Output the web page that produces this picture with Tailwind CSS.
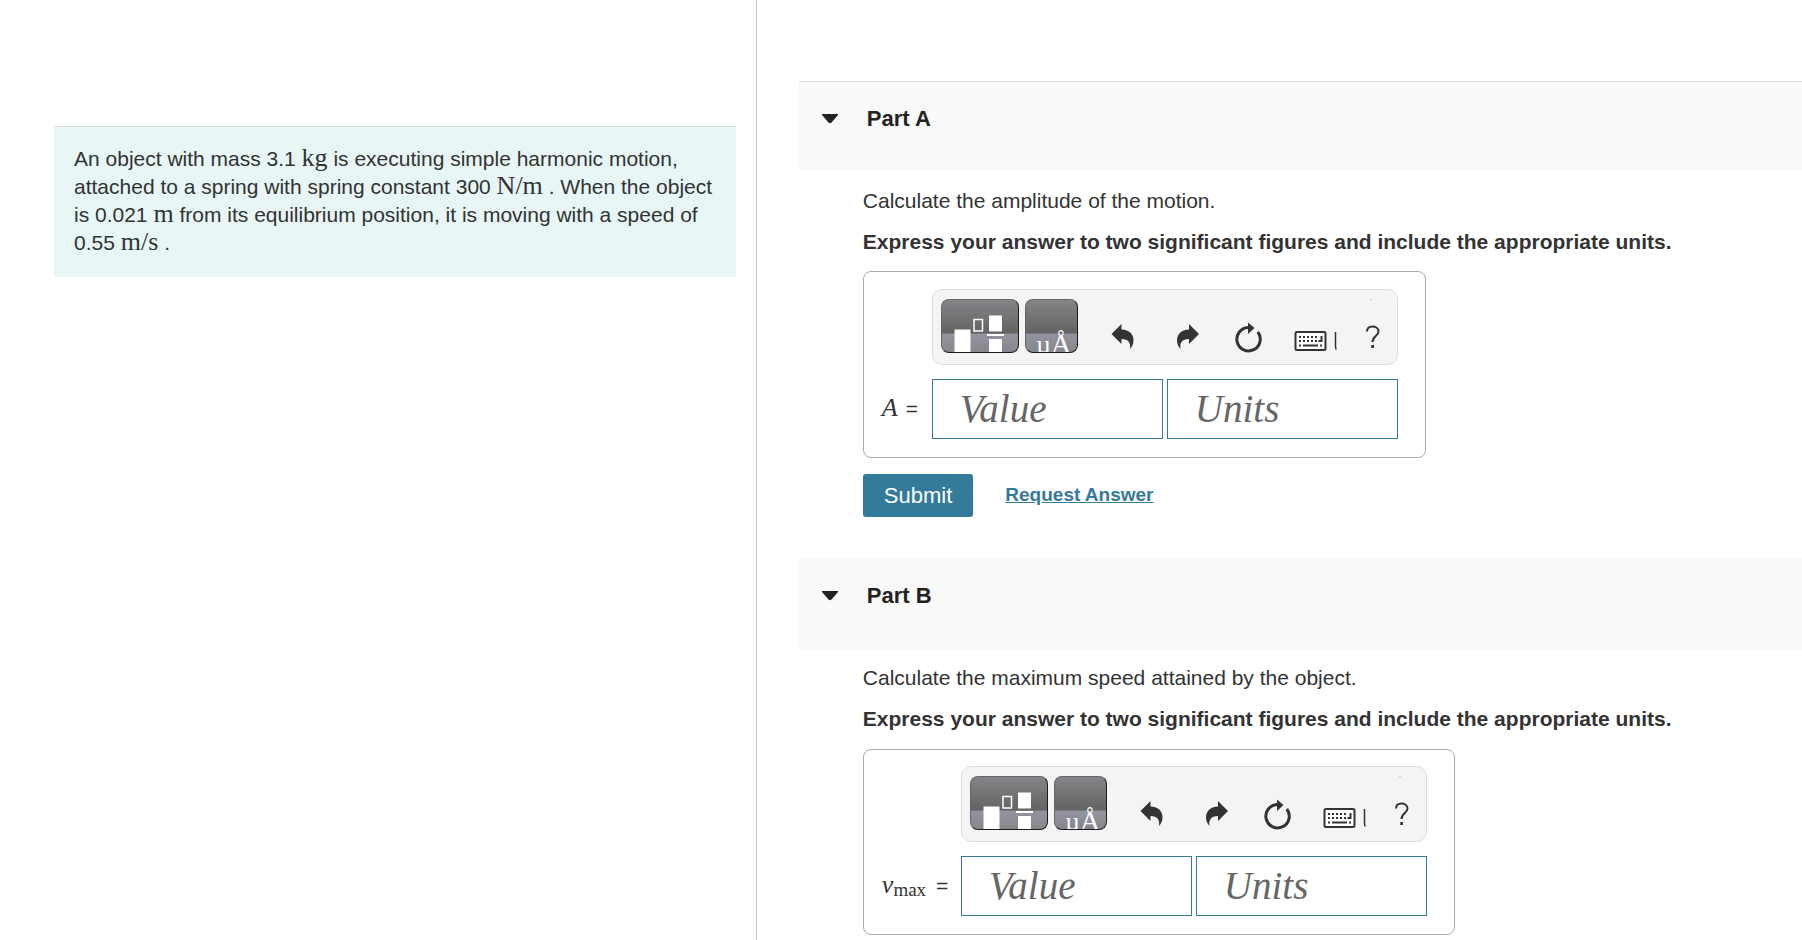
<!DOCTYPE html>
<html lang="en">
<head>
    <meta charset="UTF-8">
    <meta name="viewport" content="width=device-width, initial-scale=1.0">
    <title>Simple Harmonic Motion</title>
    <script src="https://cdn.jsdelivr.net/npm/@tailwindcss/browser@4"></script>
</head>
<body class="bg-white text-[#333] text-[21px] leading-[28px] font-['Liberation_Sans',Arial,sans-serif]">
    <!-- Shared toolbar icons -->
    <svg class="hidden">
        <symbol id="icon-templates" viewBox="0 0 76 52">
            <g fill="#fff">
                <path d="M12.500 29.500h16V53h-16zM47 15.500h13v16H47zM45 34h17v2H45zM47 39h13v14H47z" />
                <path d="M32 19.500h8.500V31H32z" fill="none" stroke="#fff" stroke-width="1.500" />
            </g>
        </symbol>
        <symbol id="icon-undo" viewBox="0 0 65 54">
            <path d="M21.500 35L31.500 25v5.500c8 0 12 5 12 11 0 3.500-1.500 6.500-3.500 8.500 1-6-1.500-10-8.500-10v5z" fill="#333" />
        </symbol>
        <symbol id="icon-redo" viewBox="0 0 65 54">
            <path d="M44 35L34 25v5.500c-8 0-12 5-12 11 0 3.500 1.500 6.500 3.500 8.500-1-6 1.500-10 8.500-10v5z" fill="#333" />
        </symbol>
        <symbol id="icon-reset" viewBox="0 0 57 54">
            <path d="M28 28.500A11.700 11.700 0 1 0 37.800 33" fill="none" stroke="#333" stroke-width="3" />
            <path d="M28 23.500l6.500 5.500-6.500 6z" fill="#333" />
        </symbol>
        <symbol id="icon-keyboard" viewBox="0 0 76 54">
            <rect x="18.500" y="33" width="30" height="18" rx="1.500" fill="#fff" stroke="#333" stroke-width="2" />
            <path d="M22 38h19M22 42h19M22 46.500h2M43 46.500h2" fill="none" stroke="#333" stroke-width="2" stroke-dasharray="2 2" />
            <path d="M26 46.500h15M44.500 37v5h-3" fill="none" stroke="#333" stroke-width="2" />
            <path d="M58.500 33v14.500l.5 3" fill="none" stroke="#333" stroke-width="1.500" />
        </symbol>
        <symbol id="icon-help" viewBox="0 0 40 54">
            <path d="M14 32.500c0-3.500 2.500-5 5.500-5s6 1.500 6 5c0 4.500-6 4.500-6 10.500" fill="none" stroke="#333" stroke-width="2" />
            <path d="M18.300 46h2.700v3h-2.700z" fill="#333" />
            <path d="M17 .5h2" stroke="#ccc" />
        </symbol>
    </svg>

    <div class="flex min-h-screen">
        <!-- Problem statement -->
        <aside class="w-[42%] shrink-0 border-r border-[#b8cadf] pt-[126px] pl-[54px] pr-5">
            <p class="bg-[#e8f6f6] border-t border-[#d5dddd] pt-[18px] pb-5 px-5">
                An object with mass 3.1 <span class="font-['Liberation_Serif',serif] text-[26px] leading-none">kg</span> is executing simple harmonic motion, attached to a spring with spring constant 300 <span class="font-['Liberation_Serif',serif] text-[26px] leading-none">N/m</span> . When the object is 0.021 <span class="font-['Liberation_Serif',serif] text-[26px] leading-none">m</span> from its equilibrium position, it is moving with a speed of 0.55 <span class="font-['Liberation_Serif',serif] text-[26px] leading-none">m/s</span> .
            </p>
        </aside>

        <main class="flex-1 min-w-0 pt-[81px] pl-[42px]">
            <!-- Part A -->
            <section>
                <h2 class="h-[90px] bg-[#f9f9f9] border-t border-[#ddd] pt-[23px] pl-[23px]">
                    <button type="button" class="flex items-center gap-[29px] text-[22px] leading-[28px] font-bold text-[#222]">
                        <svg class="w-4 h-[10px]" viewBox="0 0 16 10"><path d="M0 0h16v1L9.500 8.500Q8 10 6.500 8.500L0 1z" fill="#222" /></svg>
                        Part A
                    </button>
                </h2>
                <div class="pl-16">
                    <p class="mt-4">Calculate the amplitude of the motion.</p>
                    <p class="mt-[13px] font-bold">Express your answer to two significant figures and include the appropriate units.</p>

                    <div class="mt-[15px] w-fit grid grid-cols-[50px_466px] gap-y-[14px] border border-[#aaa] rounded-lg pt-[17px] pb-[18px] pl-[18px] pr-[27px]">
                        <div class="col-start-2 h-[76px] flex items-start bg-[#f4f4f4] border border-[#ddd] rounded-[10px] pt-[9px] pl-2">
                            <button type="button" aria-label="Templates" class="w-[78px] h-[54px] mr-[6px] overflow-hidden rounded-lg border border-t-[#666] border-l-[#666] border-r-[#1c1c1c] border-b-[#1c1c1c] bg-[linear-gradient(#858589,#636363_64%,#9494a0_65%,#86868b)]">
                                <svg class="w-[76px] h-[52px]"><use href="#icon-templates" /></svg>
                            </button>
                            <button type="button" aria-label="Symbols" class="w-[53px] h-[54px] mr-3 overflow-hidden rounded-lg border border-t-[#666] border-l-[#666] border-r-[#1c1c1c] border-b-[#1c1c1c] bg-[linear-gradient(#858589,#636363_64%,#9494a0_65%,#86868b)]">
                                <svg class="w-[51px] h-[52px] font-['Liberation_Serif',serif] text-[26px]"><text x="10" y="53" fill="#fff">µ<tspan class="text-[28px]">Å</tspan></text></svg>
                            </button>
                            <button type="button" aria-label="Undo"><svg class="w-[65px] h-[54px]"><use href="#icon-undo" /></svg></button>
                            <button type="button" aria-label="Redo"><svg class="w-[65px] h-[54px]"><use href="#icon-redo" /></svg></button>
                            <button type="button" aria-label="Reset"><svg class="w-[57px] h-[54px]"><use href="#icon-reset" /></svg></button>
                            <button type="button" aria-label="Keyboard shortcuts"><svg class="w-[76px] h-[54px]"><use href="#icon-keyboard" /></svg></button>
                            <button type="button" aria-label="Help"><svg class="w-10 h-[54px]"><use href="#icon-help" /></svg></button>
                        </div>
                        <label for="value-a" class="self-center flex items-baseline gap-2"><i class="font-['Liberation_Serif',serif] text-[26px] leading-none">A</i> =</label>
                        <div class="flex gap-1">
                            <input id="value-a" type="text" placeholder="Value" class="flex-1 min-w-0 h-[60px] border border-[#337a9b] pl-[27px] pb-[2px] font-['Liberation_Serif',serif] italic text-[39px] leading-none placeholder:text-[#666]">
                            <input aria-label="Units for A" type="text" placeholder="Units" class="flex-1 min-w-0 h-[60px] border border-[#337a9b] pl-[27px] pb-[2px] font-['Liberation_Serif',serif] italic text-[39px] leading-none placeholder:text-[#666]">
                        </div>
                    </div>

                    <div class="mt-4 flex items-center gap-8">
                        <button type="button" class="h-[43px] px-[21px] rounded-[3px] bg-[#337a9b] text-white text-[22px]">Submit</button>
                        <a href="#" class="pb-[2px] text-[19px] font-bold text-[#337a9b] underline">Request Answer</a>
                    </div>
                </div>
            </section>

            <!-- Part B -->
            <section class="mt-[42px]">
                <h2 class="h-[90px] bg-[#f9f9f9] pt-[23px] pl-[23px]">
                    <button type="button" class="flex items-center gap-[29px] text-[22px] leading-[28px] font-bold text-[#222]">
                        <svg class="w-4 h-[10px]" viewBox="0 0 16 10"><path d="M0 0h16v1L9.500 8.500Q8 10 6.500 8.500L0 1z" fill="#222" /></svg>
                        Part B
                    </button>
                </h2>
                <div class="pl-16">
                    <p class="mt-[15px]">Calculate the maximum speed attained by the object.</p>
                    <p class="mt-[13px] font-bold">Express your answer to two significant figures and include the appropriate units.</p>

                    <div class="mt-4 w-fit grid grid-cols-[79px_466px] gap-y-[14px] border border-[#aaa] rounded-lg pt-4 pb-[18px] pl-[18px] pr-[27px]">
                        <div class="col-start-2 h-[76px] flex items-start bg-[#f4f4f4] border border-[#ddd] rounded-[10px] pt-[9px] pl-2">
                            <button type="button" aria-label="Templates" class="w-[78px] h-[54px] mr-[6px] overflow-hidden rounded-lg border border-t-[#666] border-l-[#666] border-r-[#1c1c1c] border-b-[#1c1c1c] bg-[linear-gradient(#858589,#636363_64%,#9494a0_65%,#86868b)]">
                                <svg class="w-[76px] h-[52px]"><use href="#icon-templates" /></svg>
                            </button>
                            <button type="button" aria-label="Symbols" class="w-[53px] h-[54px] mr-3 overflow-hidden rounded-lg border border-t-[#666] border-l-[#666] border-r-[#1c1c1c] border-b-[#1c1c1c] bg-[linear-gradient(#858589,#636363_64%,#9494a0_65%,#86868b)]">
                                <svg class="w-[51px] h-[52px] font-['Liberation_Serif',serif] text-[26px]"><text x="10" y="53" fill="#fff">µ<tspan class="text-[28px]">Å</tspan></text></svg>
                            </button>
                            <button type="button" aria-label="Undo"><svg class="w-[65px] h-[54px]"><use href="#icon-undo" /></svg></button>
                            <button type="button" aria-label="Redo"><svg class="w-[65px] h-[54px]"><use href="#icon-redo" /></svg></button>
                            <button type="button" aria-label="Reset"><svg class="w-[57px] h-[54px]"><use href="#icon-reset" /></svg></button>
                            <button type="button" aria-label="Keyboard shortcuts"><svg class="w-[76px] h-[54px]"><use href="#icon-keyboard" /></svg></button>
                            <button type="button" aria-label="Help"><svg class="w-10 h-[54px]"><use href="#icon-help" /></svg></button>
                        </div>
                        <label for="value-b" class="self-center flex items-baseline gap-[10px] whitespace-nowrap"><span><i class="font-['Liberation_Serif',serif] text-[26px] leading-none">v</i><sub class="font-['Liberation_Serif',serif] text-[19px] static align-[-3px]">max</sub></span> =</label>
                        <div class="flex gap-1">
                            <input id="value-b" type="text" placeholder="Value" class="flex-1 min-w-0 h-[60px] border border-[#337a9b] pl-[27px] pb-[2px] font-['Liberation_Serif',serif] italic text-[39px] leading-none placeholder:text-[#666]">
                            <input aria-label="Units for v max" type="text" placeholder="Units" class="flex-1 min-w-0 h-[60px] border border-[#337a9b] pl-[27px] pb-[2px] font-['Liberation_Serif',serif] italic text-[39px] leading-none placeholder:text-[#666]">
                        </div>
                    </div>
                </div>
            </section>
        </main>
    </div>
</body>
</html>
